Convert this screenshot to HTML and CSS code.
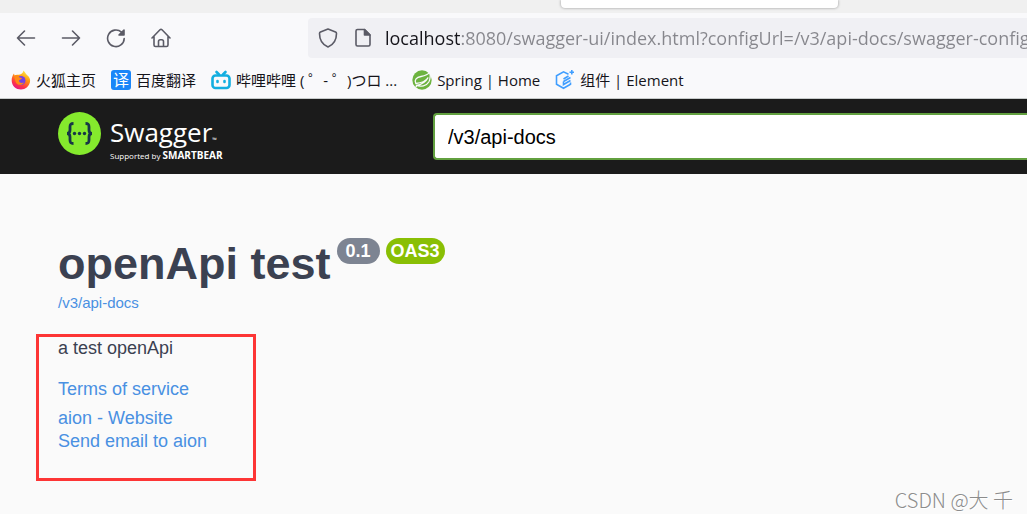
FILE: index.html
```
<!DOCTYPE html>
<html lang="zh-CN">
<head>
    <meta charset="utf-8">
    <meta name="viewport" content="width=device-width, initial-scale=1">
    <title>Swagger UI</title>
    <link rel="stylesheet" href="styles.css">
</head>
<body>
    <header class="browser">
        <div class="tab-strip">
            <div class="tab"></div>
        </div>

        <div class="toolbar">
            <div class="nav-buttons">
                <button type="button" class="nav-button" aria-label="Back">
                    <svg class="icon" viewBox="0 0 20 20"><path d="M18.500 10H1.500M8.500 3L1.500 10L8.500 17"/></svg>
                </button>
                <button type="button" class="nav-button" aria-label="Forward">
                    <svg class="icon" viewBox="0 0 20 20"><path d="M1.500 10H18.500M11.500 3L18.500 10L11.500 17"/></svg>
                </button>
                <button type="button" class="nav-button" aria-label="Reload">
                    <svg class="icon" viewBox="0 0 20 20"><path d="M18.200 10.500A8.300 8.300 0 1 1 15.500 4.200"/><path class="solid" d="M18 2V7H13Z"/></svg>
                </button>
                <button type="button" class="nav-button" aria-label="Home">
                    <svg class="icon" viewBox="0 0 20 20"><path d="M1 10L9 1.800Q10 .8 11 1.800L19 10M3 8.500V17Q3 18.500 4.500 18.500H15.500Q17 18.500 17 17V8.500M7.500 18.500V13.500Q7.500 11.800 9.200 11.800H10.800Q12.500 11.800 12.500 13.500V18.500"/></svg>
                </button>
            </div>
            <div class="url-bar">
                <svg class="icon" viewBox="0 0 20 20"><path d="M10 1L17.500 4Q18.500 4.400 18.500 5.500C18.500 12 16 16.500 10 19C4 16.500 1.500 12 1.500 5.500Q1.500 4.400 2.500 4Z"/></svg>
                <svg class="icon" viewBox="0 0 20 20"><path d="M4.500 1.500H11.500L17 7V16.500Q17 18 15.500 18H4.500Q3 18 3 16.500V3Q3 1.500 4.500 1.500Z"/><path class="solid" d="M11.500 1.500V7H17Z"/></svg>
                <input class="url-input" type="text" aria-label="Address" value="localhost:8080/swagger-ui/index.html?configUrl=/v3/api-docs/swagger-config">
            </div>
        </div>

        <nav class="bookmarks">
            <a class="bookmark" href="#">
                <svg class="favicon" viewBox="0 0 20 20">
                    <defs>
                        <linearGradient id="fox" x1="0.8" y1="0" x2="0.3" y2="1">
                            <stop offset="0" stop-color="#fff44f"/>
                            <stop offset="0.4" stop-color="#ff980e"/>
                            <stop offset="0.75" stop-color="#ff3647"/>
                            <stop offset="1" stop-color="#e31587"/>
                        </linearGradient>
                    </defs>
                    <path fill="url(#fox)" d="M12.500 .5C14 2 14.500 3.500 16 5C18.500 7 19.500 9 19 12C18 16.500 14.500 19.500 10 19.500C5 19.500 1 16 .7 11C.5 8 1.500 5.500 3 3.500L3.500 5.500C5 4.500 6 4.500 7.500 4.800C9.500 4.500 12 3.500 12.500 .5Z"/>
                    <circle cx="10" cy="10.500" r="4.500" fill="#7542e5"/>
                    <path fill="#ff8a16" d="M3 6C5 5 7.500 5.500 8.500 7.500L11 8C10.500 9.500 8.500 9.500 8 10.500C8 12.500 10 13.500 13 12.500C11 16 5.500 15.500 4.500 11.500Z"/>
                </svg>
                <span>火狐主页</span>
            </a>
            <a class="bookmark" href="#">
                <span class="favicon translate">译</span>
                <span>百度翻译</span>
            </a>
            <a class="bookmark" href="#">
                <svg class="favicon bili" viewBox="0 0 20 20">
                    <path d="M5.500 2L8 4.500M14.500 2L12 4.500"/>
                    <rect x="1.500" y="5.500" width="17" height="12.500" rx="3"/>
                    <path d="M6.500 11V12M13.500 11V12"/>
                </svg>
                <span>哔哩哔哩 ( ゜- ゜)つロ ...</span>
            </a>
            <a class="bookmark" href="#">
                <svg class="favicon" viewBox="0 0 20 20">
                    <circle cx="10" cy="10" r="9.700" fill="#6db33f"/>
                    <path class="leaf" d="M17.800 2C15.800 5 13 5.800 9 6.500C4.500 7.200 2 10 3.800 13.500C9 13 13.500 11.500 16.200 7.500C13.500 12.500 9.500 14.800 4 15.500C9 17 14.500 16 16.800 12C18.300 9 18.500 5 17.800 2Z"/>
                    <circle cx="4.200" cy="16.500" r=".8" fill="#f9f9fb"/>
                </svg>
                <span>Spring | Home</span>
            </a>
            <a class="bookmark" href="#">
                <svg class="favicon element" viewBox="0 0 20 20">
                    <path d="M13.500 4.200L8.500 1.800L1.500 5.800V14.200L8.500 18.300L15.500 14.200V12.500M15.500 7.500L8.500 11.500M15.500 10.500L8.500 14.500V11.500M13.500 6L8.500 9M14.500 2.200H19M16.800 0V4.400"/>
                </svg>
                <span>组件 | Element</span>
            </a>
        </nav>
    </header>

    <div class="topbar">
        <a class="logo" href="#">
            <svg class="logo-mark" viewBox="0 0 43 43">
                <circle cx="21.500" cy="21.500" r="21.500" fill="#85ea2d"/>
                <path class="brace" d="M15.500 11.500C12.500 11.500 12 12.500 12 15V18Q12 21.500 9 21.500Q12 21.500 12 25V28C12 30.500 12.500 31.500 15.500 31.500M27.500 11.500C30.500 11.500 31 12.500 31 15V18Q31 21.500 34 21.500Q31 21.500 31 25V28C31 30.500 30.500 31.500 27.500 31.500"/>
                <g fill="#173647">
                    <circle cx="16.500" cy="21.500" r="1.700"/>
                    <circle cx="21.500" cy="21.500" r="1.700"/>
                    <circle cx="26.500" cy="21.500" r="1.700"/>
                </g>
            </svg>
            <span class="logo-text">
                <span class="logo-name">Swagger<small class="logo-tm">™</small></span>
                <span class="logo-support">Supported by <b>SMARTBEAR</b></span>
            </span>
        </a>
        <input class="download-url" type="text" aria-label="API definition URL" value="/v3/api-docs">
    </div>

    <main class="swagger-ui">
        <h1 class="title">openApi test
            <span class="badges"><small class="badge">0.1</small><small class="badge oas">OAS3</small></span>
        </h1>
        <a class="spec-link" href="#">/v3/api-docs</a>

        <section class="info">
            <p class="description">a test openApi</p>
            <a class="terms" href="#">Terms of service</a>
            <a href="#">aion - Website</a>
            <a href="#">Send email to aion</a>
        </section>
    </main>

    <div class="watermark">CSDN @大 千</div>
</body>
</html>
```
FILE: styles.css
```
* {
    box-sizing: border-box;
}

body {
    margin: 0;
    padding-bottom: 5px;
    min-height: 100vh;
    display: flex;
    flex-direction: column;
    position: relative;
    overflow: hidden;
    background-color: white;
    font-family: "Liberation Sans", Arial, sans-serif;
    color: #3b4151;
}

a {
    color: #4990e2;
    text-decoration: none;
}

/* Browser chrome */
.browser {
    background-color: #f9f9fb;
    border-bottom: 1px solid #c8cccc;
    font-family: "Open Sans", "Noto Sans CJK SC", sans-serif;
}

.tab-strip {
    height: 13px;
    background-color: #f0f0f0;
}

.tab {
    width: 27%;
    height: 8px;
    margin-left: 54.6%;
    background-color: white;
    border-radius: 0 0 4px 4px;
    box-shadow: 0 0 3px rgba(0, 0, 0, 0.4);
}

.toolbar {
    display: flex;
    align-items: center;
    padding: 5px 0 5px 11px;
}

.nav-buttons {
    display: flex;
    gap: 15px;
    margin-right: 132px;
}

.nav-button {
    width: 30px;
    height: 30px;
    padding: 5px;
    border: 0;
    background: none;
}

.icon {
    display: block;
    flex: none;
    width: 20px;
    height: 20px;
    fill: none;
    stroke: #5b5b66;
    stroke-width: 1.6;
    stroke-linecap: round;
    stroke-linejoin: round;
}

.icon .solid {
    fill: #5b5b66;
}

.url-bar {
    flex: 1;
    min-width: 0;
    height: 40px;
    display: flex;
    align-items: center;
    gap: 15px;
    padding-left: 10px;
    background-color: #f0f0f4;
    border-radius: 4px 0 0 4px;
}

/* host is dark, the rest of the address is grey */
.url-input {
    flex: 1;
    min-width: 0;
    padding: 0;
    margin-left: -3px;
    border: 0;
    outline: 0;
    font: 18px "Open Sans", sans-serif;
    color: transparent;
    background: linear-gradient(90deg, #15141a 75px, #86868c 75px);
    -webkit-background-clip: text;
    background-clip: text;
}

.bookmarks {
    display: flex;
    align-items: center;
    gap: 15px;
    height: 35px;
    padding: 0 0 1px 11px;
}

.bookmark {
    display: flex;
    align-items: center;
    gap: 5px;
    white-space: nowrap;
    font-size: 15px;
    line-height: 20px;
    color: #15141a;
}

.favicon {
    width: 20px;
    height: 20px;
    flex: none;
}

.translate {
    border-radius: 3px;
    background-color: #1a86f8;
    color: white;
    font-size: 16px;
    text-align: center;
}

.bili {
    fill: none;
    stroke: #12aee0;
    stroke-width: 2.6;
    stroke-linecap: round;
}

.leaf {
    fill: none;
    stroke: #f9f9fb;
    stroke-width: 1.3;
}

.element {
    fill: none;
    stroke: #409eff;
    stroke-width: 1.6;
}

/* Swagger top bar */
.topbar {
    display: flex;
    align-items: center;
    height: 75px;
    padding-left: 58px;
    background-color: #1b1b1b;
}

.logo {
    display: flex;
    gap: 9px;
    width: 375px;
    flex: none;
    color: white;
    font-family: "Open Sans", sans-serif;
}

.logo-mark {
    width: 43px;
    height: 43px;
}

.brace {
    fill: none;
    stroke: #173647;
    stroke-width: 2.8;
}

.logo-text {
    display: flex;
    flex-direction: column;
    padding-top: 2px;
}

.logo-name {
    font-size: 26px;
    line-height: 36px;
}

.logo-tm {
    font-size: 6px;
    line-height: 1;
}

.logo-support {
    font-size: 8px;
    line-height: 12px;
    white-space: nowrap;
}

.logo-support b {
    font-size: 10px;
    line-height: 1;
}

.download-url {
    flex: 1;
    min-width: 0;
    height: 47px;
    padding: 2px 13px 0;
    border: 2px solid #62a03f;
    border-right: 0;
    border-radius: 4px 0 0 4px;
    outline: 0;
    background-color: white;
    color: black;
    font: 20px "Liberation Sans", Arial, sans-serif;
}

/* API info */
.swagger-ui {
    flex: 1;
    padding: 62px 58px 32px;
    background-color: #fafafa;
    font-size: 18px;
    line-height: 23px;
}

.title {
    display: flex;
    gap: 6px;
    margin: 0;
    font-size: 45px;
    line-height: 56px;
}

.badges {
    display: flex;
    gap: 6px;
    padding-top: 2px;
}

.badge {
    height: 26px;
    padding: 0 9px;
    border-radius: 13px;
    background-color: #7d8492;
    color: white;
    font-size: 18px;
    line-height: 26px;
}

.oas {
    padding: 0 5px;
    background-color: #89bf04;
}

.spec-link {
    display: block;
    font-size: 15px;
    line-height: 22px;
}

.info {
    width: 220px;
    margin: 20px 0 0 -22px;
    padding: 0 19px 25px;
    border: 3px solid #fd3535;
}

.description {
    margin: 0 0 18px;
}

.info a {
    display: block;
}

.info .terms {
    margin-bottom: 6px;
}

.watermark {
    position: absolute;
    right: 14px;
    bottom: 5px;
    font: 300 20px "Noto Sans CJK SC", sans-serif;
    color: #8c8c8c;
    text-shadow: 1px 1px 0 white;
}
```
